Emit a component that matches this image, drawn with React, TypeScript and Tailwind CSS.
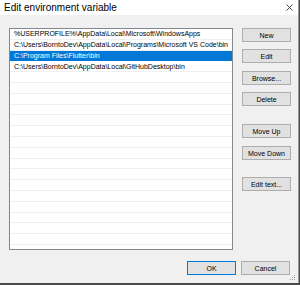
import React from 'react';

const paths = [
  '%USERPROFILE%\\AppData\\Local\\Microsoft\\WindowsApps',
  'C:\\Users\\BorntoDev\\AppData\\Local\\Programs\\Microsoft VS Code\\bin',
  'C:\\Program Files\\Flutter\\bin',
  'C:\\Users\\BorntoDev\\AppData\\Local\\GitHubDesktop\\bin',
];

const SELECTED = 2;
const ROWS = 21;

const Btn = ({ label, primary, className = '' }: { label: string; primary?: boolean; className?: string }) => (
  <div
    className={`w-[49px] h-[14px] flex items-center justify-center bg-[#e1e1e1] border text-[7px] leading-none text-black whitespace-nowrap ${
      primary ? 'border-[#0078d7]' : 'border-[#adadad]'
    } ${className}`}
  >
    {label}
  </div>
);

export default function App() {
  const rows = Array.from({ length: ROWS }, (_, i) => paths[i] ?? '');

  return (
    <div className="w-[300px] h-[285px] bg-[#4a4a4a] overflow-hidden" style={{ fontFamily: '"Liberation Sans", Arial, sans-serif' }}>
      <div className="w-[299px] h-[283px] bg-[#f0f0f0] border-r border-[#9a9a9a] flex flex-col relative">
        {/* title bar */}
        <div className="h-[15px] bg-white flex items-center justify-between pl-[4px] pr-[5px]">
          <span className="text-[10px] leading-none text-black">Edit environment variable</span>
          <svg width="7" height="7" viewBox="0 0 7 7" className="text-[#333]">
            <path d="M0.5 0.5 L6.5 6.5 M6.5 0.5 L0.5 6.5" stroke="currentColor" strokeWidth="0.9" />
          </svg>
        </div>

        {/* body */}
        <div className="flex pt-[13px] pl-[9px]">
          <div className="w-[224px] h-[222px] border border-[#828790] bg-white overflow-hidden">
            {rows.map((p, i) => (
              <div
                key={i}
                className={`h-[10.8px] flex items-center pl-[4px] border-b text-[7px] leading-none whitespace-nowrap ${
                  i === SELECTED ? 'bg-[#0078d7] text-white border-[#0078d7]' : 'text-black border-[#f0f0f0]'
                }`}
              >
                {p}
              </div>
            ))}
          </div>

          <div className="ml-[9px] flex flex-col">
            <Btn label="New" />
            <Btn label="Edit" className="mt-[7px]" />
            <Btn label="Browse..." className="mt-[8px]" />
            <Btn label="Delete" className="mt-[7px]" />
            <Btn label="Move Up" className="mt-[18px]" />
            <Btn label="Move Down" className="mt-[8px]" />
            <Btn label="Edit text..." className="mt-[17px]" />
          </div>
        </div>

        {/* footer */}
        <div className="flex justify-end gap-[5px] pr-[8px] mt-[11px]">
          <Btn label="OK" primary />
          <Btn label="Cancel" />
        </div>

        {/* resize grip */}
        <svg width="6" height="6" viewBox="0 0 6 6" className="absolute right-[2px] bottom-[2px]">
          <rect x="4" y="0" width="1" height="1" fill="#a0a0a0" />
          <rect x="2" y="2" width="1" height="1" fill="#a0a0a0" />
          <rect x="4" y="2" width="1" height="1" fill="#a0a0a0" />
          <rect x="0" y="4" width="1" height="1" fill="#a0a0a0" />
          <rect x="2" y="4" width="1" height="1" fill="#a0a0a0" />
          <rect x="4" y="4" width="1" height="1" fill="#a0a0a0" />
        </svg>
      </div>
    </div>
  );
}
